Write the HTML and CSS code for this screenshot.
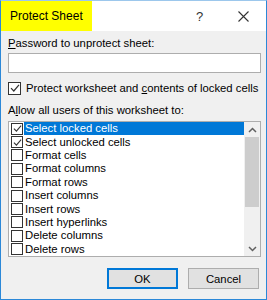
FILE: index.html
```html
<!DOCTYPE html>
<html lang="en">
<head>
    <meta charset="UTF-8">
    <title>Protect Sheet</title>
    <link rel="stylesheet" href="styles.css">
</head>
<body>
    <div class="dialog">
        <div class="titlebar">
            <span class="title">Protect Sheet</span>
            <span class="help">?</span>
            <span class="close">
                <svg width="11" height="11" viewBox="0 0 11 11"><path d="M0.5 0.5L10.5 10.5M10.5 0.5L0.5 10.5" stroke="#333" stroke-width="1.1" fill="none"/></svg>
            </span>
        </div>
        <div class="content">
            <div class="field-label"><u>P</u>assword to unprotect sheet:</div>
            <div class="password"></div>

            <div class="check-row">
                <span class="box"><svg width="10" height="10" viewBox="0 0 10 10"><path d="M1 5.2L3.8 8L9 1.8" stroke="#333" stroke-width="1.2" fill="none"/></svg></span>
                <span>Protect worksheet and <u>c</u>ontents of locked cells</span>
            </div>

            <div class="list-label">A<u>l</u>low all users of this worksheet to:</div>
            <div class="listbox">
                <ul class="items">
                    <li class="selected"><span class="box"><svg width="10" height="10" viewBox="0 0 10 10"><path d="M1 5.2L3.8 8L9 1.8" stroke="#333" stroke-width="1.2" fill="none"/></svg></span><span class="item-text">Select locked cells</span></li>
                    <li><span class="box"><svg width="10" height="10" viewBox="0 0 10 10"><path d="M1 5.2L3.8 8L9 1.8" stroke="#333" stroke-width="1.2" fill="none"/></svg></span><span class="item-text">Select unlocked cells</span></li>
                    <li><span class="box"></span><span class="item-text">Format cells</span></li>
                    <li><span class="box"></span><span class="item-text">Format columns</span></li>
                    <li><span class="box"></span><span class="item-text">Format rows</span></li>
                    <li><span class="box"></span><span class="item-text">Insert columns</span></li>
                    <li><span class="box"></span><span class="item-text">Insert rows</span></li>
                    <li><span class="box"></span><span class="item-text">Insert hyperlinks</span></li>
                    <li><span class="box"></span><span class="item-text">Delete columns</span></li>
                    <li><span class="box"></span><span class="item-text">Delete rows</span></li>
                </ul>
                <div class="scrollbar">
                    <span class="arrow"><svg width="9" height="6" viewBox="0 0 9 6"><path d="M1 5L4.5 1.5L8 5" stroke="#606060" stroke-width="1.5" fill="none"/></svg></span>
                    <span class="thumb"></span>
                    <span class="track"></span>
                    <span class="arrow"><svg width="9" height="6" viewBox="0 0 9 6"><path d="M1 1L4.5 4.5L8 1" stroke="#606060" stroke-width="1.5" fill="none"/></svg></span>
                </div>
            </div>

            <div class="buttons">
                <button class="btn default">OK</button>
                <button class="btn">Cancel</button>
            </div>
        </div>
    </div>
</body>
</html>
```

FILE: styles.css
```css
body {
    margin: 0;
    background-color: #fff;
    font-family: "Liberation Sans", Arial, sans-serif;
    font-size: 11.3px;
    color: #000;
}
.dialog {
    width: 265px;
    height: 298px;
    border: 1px solid #2b88d8;
    border-top-color: #9cc7ec;
    background-color: #f0f0f0;
    display: flex;
    flex-direction: column;
}
.titlebar {
    height: 30px;
    background-color: #fff;
    display: flex;
    align-items: center;
}
.title {
    height: 30px;
    width: 91px;
    background-color: #ffff00;
    display: flex;
    align-items: center;
    padding-left: 9px;
    box-sizing: border-box;
    font-size: 12px;
}
.help {
    margin-left: 104px;
    font-size: 13px;
    color: #333;
}
.close {
    margin-left: 35px;
    display: flex;
}
.content {
    padding: 5px 5px 0 7px;
    display: flex;
    flex-direction: column;
    white-space: nowrap;
}
.field-label {
    height: 15px;
    line-height: 15px;
}
.password {
    margin-top: 2px;
    height: 18px;
    background-color: #fff;
    border: 1px solid #adadad;
}
.check-row {
    margin-top: 8px;
    display: flex;
    align-items: center;
    gap: 5px;
    height: 14px;
}
.box {
    width: 11px;
    height: 11px;
    border: 1px solid #333;
    background-color: #fff;
    display: flex;
    align-items: center;
    justify-content: center;
    flex-shrink: 0;
}
.items .box {
    width: 10px;
    height: 10px;
}
.items .box svg {
    width: 9px;
    height: 9px;
}
.list-label {
    margin-top: 8px;
    height: 15px;
    line-height: 15px;
}
.listbox {
    margin-top: 3px;
    height: 134px;
    border: 1px solid #adadad;
    background-color: #fff;
    display: flex;
}
.items {
    list-style: none;
    margin: 0;
    padding: 0 0 0 2px;
    flex: 1;
}
.items li {
    height: 13.4px;
    display: flex;
    align-items: center;
    gap: 1px;
}
.items .item-text {
    flex: 1;
    line-height: 13px;
    padding-left: 1px;
}
.items li.selected .item-text {
    background-color: #0078d7;
    color: #fff;
}
.scrollbar {
    width: 16px;
    background-color: #f0f0f0;
    display: flex;
    flex-direction: column;
    align-items: center;
}
.arrow {
    height: 15px;
    display: flex;
    align-items: center;
    justify-content: center;
}
.thumb {
    width: 14px;
    height: 70px;
    background-color: #cdcdcd;
}
.track {
    flex: 1;
}
.buttons {
    margin-top: 11px;
    display: flex;
    justify-content: flex-end;
    gap: 10px;
    padding-right: 2px;
}
.btn {
    width: 71px;
    height: 21px;
    font-family: inherit;
    font-size: 11.3px;
    color: #000;
    background-color: #e1e1e1;
    border: 1px solid #adadad;
    padding: 0;
}
.btn.default {
    border: 2px solid #0078d7;
}
```
